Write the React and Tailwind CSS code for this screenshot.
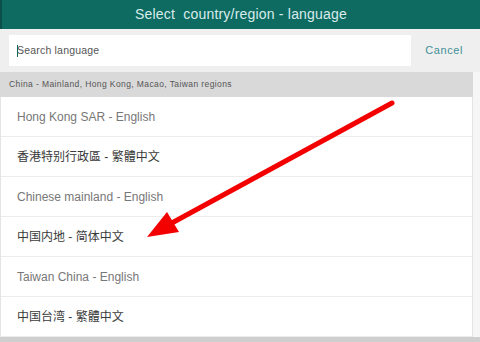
import React from 'react';

const rows = [
  { label: 'Hong Kong SAR - English', zh: false },
  { label: '香港特别行政區 - 繁體中文', zh: true },
  { label: 'Chinese mainland - English', zh: false },
  { label: '中国内地 - 简体中文', zh: true },
  { label: 'Taiwan China - English', zh: false },
  { label: '中国台湾 - 繁體中文', zh: true },
];

export default function App() {
  return (
    <div
      className="relative w-[480px] h-[342px] overflow-hidden bg-[#f6f6f6]"
      style={{ fontFamily: '"Liberation Sans", "Noto Sans CJK SC", sans-serif' }}
    >
      {/* Header */}
      <div className="h-[29px] bg-[#0e6b62] flex items-center justify-center border-l-2 border-[#0a4f49]">
        <span className="text-[14px] text-[#d9ecea] tracking-[0.2px]">Select&nbsp; country/region - language</span>
      </div>

      {/* Search */}
      <div className="h-[43px] bg-[#efefef] flex items-center pl-[9px] pr-[17px] gap-[14px]">
        <div className="flex-1 h-[31px] bg-white flex items-center pl-[8px]">
          <span className="w-[1px] h-[12px] bg-[#0e6b62]"></span>
          <span className="text-[10.5px] text-[#555] -ml-[1px] tracking-[0.2px]">Search language</span>
        </div>
        <span className="text-[11px] text-[#3f8f97] tracking-[0.6px]">Cancel</span>
      </div>

      {/* Section header */}
      <div className="h-[25px] bg-[#d9d9d9] flex items-center pl-[9px] w-[473px]">
        <span className="text-[8.5px] text-[#555] tracking-[0.4px]">China - Mainland, Hong Kong, Macao, Taiwan regions</span>
      </div>

      {/* List */}
      <div className="w-[473px] bg-white border-r border-l border-[#e4e4e4]">
        {rows.map((r) => (
          <div key={r.label} className="h-10 border-b border-[#ececec] flex items-center pl-[16px]">
            <span className={r.zh ? 'text-[12px] text-[#3a3a3a]' : 'text-[12px] text-[#777]'}>{r.label}</span>
          </div>
        ))}
      </div>
      <div className="h-[5px] bg-[#cfcfcf]"></div>

      {/* Red arrow overlay */}
      <svg className="absolute left-0 top-0 pointer-events-none" width="480" height="342" viewBox="0 0 480 342">
        <line x1="392" y1="103" x2="170" y2="224" stroke="#f30000" strokeWidth="5" strokeLinecap="round" />
        <polygon points="147,237 167,212 179,232" fill="#f30000" />
      </svg>
    </div>
  );
}
